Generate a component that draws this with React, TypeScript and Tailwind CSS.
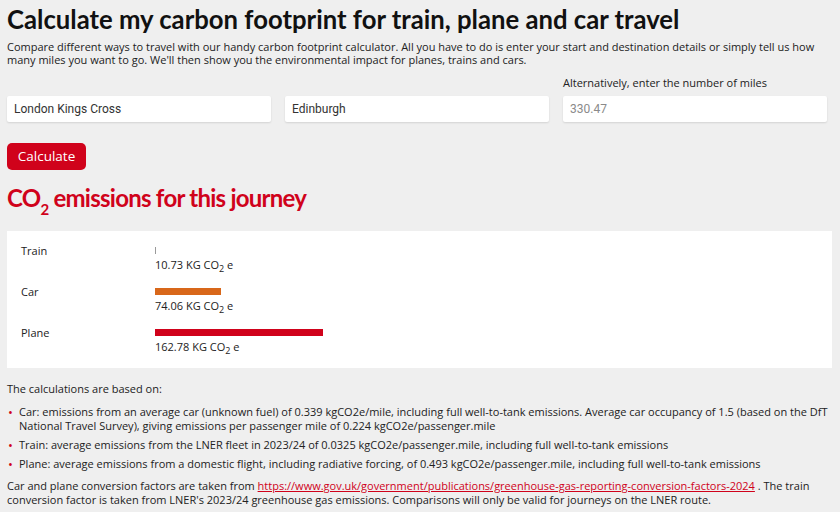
import React from 'react';

const bars = [
  { label: 'Train', value: '10.73', width: 1, color: 'bg-[#9a9a9a]' },
  { label: 'Car', value: '74.06', width: 66, color: 'bg-[#d8671a]' },
  { label: 'Plane', value: '162.78', width: 168, color: 'bg-[#d0021b]' },
];

const notes = [
  'Car: emissions from an average car (unknown fuel) of 0.339 kgCO2e/mile, including full well-to-tank emissions. Average car occupancy of 1.5 (based on the DfT National Travel Survey), giving emissions per passenger mile of 0.224 kgCO2e/passenger.mile',
  'Train: average emissions from the LNER fleet in 2023/24 of 0.0325 kgCO2e/passenger.mile, including full well-to-tank emissions',
  'Plane: average emissions from a domestic flight, including radiative forcing, of 0.493 kgCO2e/passenger.mile, including full well-to-tank emissions',
];

function Field({ value, muted }: { value: string; muted?: boolean }) {
  return (
    <div
      className={`h-[26px] bg-white rounded-[2px] shadow-[0_1px_2px_rgba(0,0,0,0.12)] flex items-center px-[7px] text-[12px] font-['Roboto',sans-serif] ${
        muted ? 'text-[#8a8a8a]' : 'text-[#333]'
      }`}
    >
      {value}
    </div>
  );
}

export default function App() {
  return (
    <main className="w-[840px] h-[512px] overflow-hidden bg-[#efefef] text-[#222] font-['Open_Sans',sans-serif] px-[7px]">
      <h1 className="text-[25.7px] leading-[36px] font-bold font-['Lato',sans-serif] text-[#111] pt-px">
        Calculate my carbon footprint for train, plane and car travel
      </h1>
      <p className="text-[11px] leading-[13px] mt-[3px] w-[812px]">
        Compare different ways to travel with our handy carbon footprint calculator. All you have to do is enter your start and destination details or simply tell us how many miles you want to go. We'll then show you the environmental impact for planes, trains and cars.
      </p>

      <div className="grid grid-cols-3 gap-x-[14px] mt-[10px] w-[820px]">
        <div />
        <div />
        <div className="text-[11px] leading-[13px] pb-[7px]">Alternatively, enter the number of miles</div>
        <Field value="London Kings Cross" />
        <Field value="Edinburgh" />
        <Field value="330.47" muted />
      </div>

      <button className="mt-[21px] h-[27px] w-[79px] rounded-[5px] bg-[#d0021b] text-white text-[13.5px]">
        Calculate
      </button>

      <h2 className="text-[24px] leading-[30px] font-bold font-['Lato',sans-serif] text-[#d0021b] tracking-[-0.75px] mt-[13px]">
        CO<sub className="text-[15px] align-[-4px]">2</sub> emissions for this journey
      </h2>

      <section className="bg-white w-[825px] mt-[18px] pt-[13px] pb-[15px] px-[14px] flex flex-col gap-[14px]">
        {bars.map((b) => (
          <div key={b.label} className="flex">
            <div className="w-[134px] text-[11px] leading-[13px]">{b.label}</div>
            <div className="flex flex-col gap-[4px] pt-[3px]">
              <div className={`h-[7px] ${b.color}`} style={{ width: b.width }} />
              <div className="text-[11px] leading-[13px]">
                {b.value} KG CO<sub className="text-[9px] align-[-1px]">2</sub> e
              </div>
            </div>
          </div>
        ))}
      </section>

      <p className="text-[11px] leading-[13px] mt-[14px]">The calculations are based on:</p>
      <ul className="mt-[10px] flex flex-col gap-[5px] w-[821px]">
        {notes.map((n) => (
          <li key={n} className="flex text-[11px] leading-[14px]">
            <span className="text-[#d0021b] w-[12px] shrink-0 pl-px text-[13px] leading-[14px]">•</span>
            <span>{n}</span>
          </li>
        ))}
      </ul>
      <p className="text-[11px] leading-[14px] mt-[8px] w-[810px]">
        Car and plane conversion factors are taken from{' '}
        <a className="text-[#d0021b] underline" href="#">
          https://www.gov.uk/government/publications/greenhouse-gas-reporting-conversion-factors-2024
        </a>{' '}
        . The train
        <br />
        conversion factor is taken from LNER's 2023/24 greenhouse gas emissions. Comparisons will only be valid for journeys on the LNER route.
      </p>
    </main>
  );
}
